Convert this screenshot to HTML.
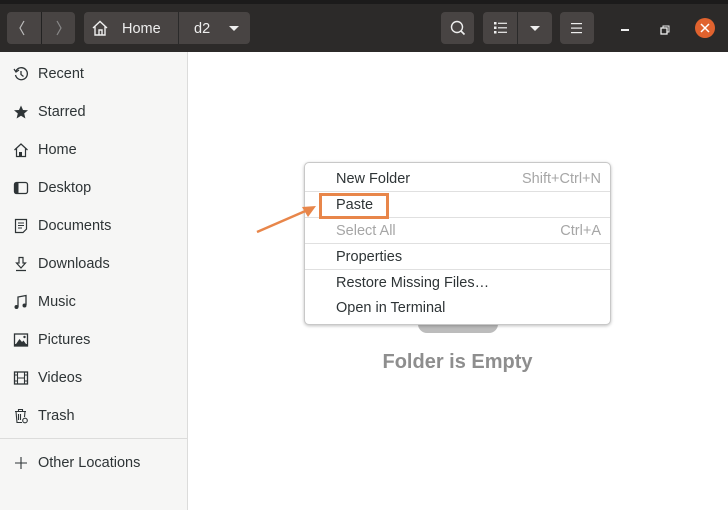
<!DOCTYPE html>
<html><head><style>
*{margin:0;padding:0;box-sizing:border-box}
body{width:728px;height:510px;overflow:hidden;font-family:"Liberation Sans",sans-serif;background:#fff;position:relative}
.top{position:absolute;left:0;top:0;width:728px;height:52px;background:#2c2a29;border-top:4px solid #1c1b1b}
.btn{position:absolute;top:12px;height:32px;background:#484443;border-radius:4px}
.side{position:absolute;left:0;top:52px;width:188px;height:458px;background:#f6f6f5;border-right:1px solid #dcdcdb}
.it{position:absolute;left:38px;font-size:14.5px;color:#2e3436}
.ic{position:absolute;left:13px;width:16px;height:16px}
.menu{position:absolute;left:304px;top:162px;width:307px;height:163px;background:#fff;border:1px solid #c8c8c8;border-radius:5px;box-shadow:0 1px 3px rgba(0,0,0,.25)}
.mi{position:absolute;left:31px;font-size:14.5px;color:#2e3436}
.sc{position:absolute;right:9px;font-size:14.5px;color:#a6a6a6}
.sep{position:absolute;left:0;right:0;height:1px;background:#e0e0e0}
</style></head><body>
<div class="top">
 <div class="btn" style="left:7px;width:68px;top:8px"></div>
 <div style="position:absolute;left:41px;top:8px;width:1px;height:32px;background:#222"></div>
 <svg style="position:absolute;left:17px;top:16px" width="10" height="16"><path d="M7 1 L3 8 L7 15" stroke="#bbb" fill="none" stroke-width="1.2"/></svg>
 <svg style="position:absolute;left:54px;top:16px" width="10" height="16"><path d="M3 1 L7 8 L3 15" stroke="#888" fill="none" stroke-width="1.2"/></svg>
 <div class="btn" style="left:84px;width:166px;top:8px"></div>
 <div style="position:absolute;left:178px;top:8px;width:1px;height:32px;background:#2a2a2a"></div>
 <svg style="position:absolute;left:91px;top:16px" width="18" height="16"><path d="M2 8 L9 1.5 L16 8 M4 6.5 V15 H14 V6.5 M8 15 V10 H11 V15" stroke="#eee" fill="none" stroke-width="1.4"/></svg>
 <div style="position:absolute;left:122px;top:17px;color:#eee;font-size:14.5px">Home</div>
 <div style="position:absolute;left:194px;top:17px;color:#eee;font-size:14.5px">d2</div>
 <svg style="position:absolute;left:228px;top:21px" width="12" height="8"><path d="M1 1 H11 L6 6Z" fill="#eee"/></svg>
 <div class="btn" style="left:441px;width:33px;top:8px"></div>
 <svg style="position:absolute;left:449px;top:15px" width="18" height="18"><circle cx="8" cy="8" r="5.5" stroke="#eee" fill="none" stroke-width="1.4"/><path d="M12 12 L15.5 15.5" stroke="#eee" stroke-width="1.6"/></svg>
 <div class="btn" style="left:483px;width:69px;top:8px"></div>
 <div style="position:absolute;left:517px;top:8px;width:1px;height:32px;background:#2a2a2a"></div>
 <svg style="position:absolute;left:493px;top:17px" width="16" height="14"><g fill="#eee"><rect x="1" y="1" width="2.5" height="2.5"/><rect x="1" y="5.5" width="2.5" height="2.5"/><rect x="1" y="10" width="2.5" height="2.5"/><rect x="5" y="1.7" width="9" height="1.2"/><rect x="5" y="6.2" width="9" height="1.2"/><rect x="5" y="10.7" width="9" height="1.2"/></g></svg>
 <svg style="position:absolute;left:529px;top:21px" width="12" height="8"><path d="M1 1 H11 L6 6Z" fill="#eee"/></svg>
 <div class="btn" style="left:560px;width:34px;top:8px"></div>
 <svg style="position:absolute;left:570px;top:17px" width="14" height="14"><g fill="#eee"><rect x="1" y="2" width="11" height="1.2"/><rect x="1" y="6.5" width="11" height="1.2"/><rect x="1" y="11" width="11" height="1.2"/></g></svg>
 <div style="position:absolute;left:621px;top:25px;width:8px;height:1.5px;background:#eee"></div>
 <svg style="position:absolute;left:660px;top:21px" width="10" height="10"><rect x="1" y="3" width="6" height="6" stroke="#eee" fill="none" stroke-width="1.3"/><path d="M3 3 V1 H9 V7 H7" stroke="#eee" fill="none" stroke-width="1"/></svg>
 <div style="position:absolute;left:695px;top:14px;width:20px;height:20px;border-radius:50%;background:#e0622e"></div>
 <svg style="position:absolute;left:700px;top:19px" width="10" height="10"><path d="M1 1 L9 9 M9 1 L1 9" stroke="#fff" stroke-width="1.5"/></svg>
</div>
<div class="side">
 <svg class="ic" style="top:14px" viewBox="0 0 16 16"><path d="M3 5 A6 6 0 1 1 2.5 9" stroke="#2e3436" fill="none" stroke-width="1.3"/><path d="M1 3 L3 6 L6 4" stroke="#2e3436" fill="none" stroke-width="1.2"/><path d="M8 5 V8.5 L10.5 10.5" stroke="#2e3436" fill="none" stroke-width="1.3"/></svg>
 <div class="it" style="top:14px">Recent</div>
 <svg class="ic" style="top:52px" viewBox="0 0 16 16"><path d="M8 1.5 L10 6 L15 6.3 L11.2 9.5 L12.4 14.5 L8 11.8 L3.6 14.5 L4.8 9.5 L1 6.3 L6 6Z" fill="#2e3436"/></svg>
 <div class="it" style="top:52px">Starred</div>
 <svg class="ic" style="top:90px" viewBox="0 0 16 16"><path d="M1.5 8 L8 2 L14.5 8 M3.5 6.5 V14.5 H12.5 V6.5" stroke="#2e3436" fill="none" stroke-width="1.2"/><rect x="6" y="10" width="3" height="4.5" fill="#2e3436"/></svg>
 <div class="it" style="top:90px">Home</div>
 <svg class="ic" style="top:128px" viewBox="0 0 16 16"><rect x="1.5" y="2.5" width="13" height="11" rx="2" stroke="#2e3436" fill="none" stroke-width="1.3"/><rect x="1.5" y="2.5" width="4" height="11" fill="#2e3436"/></svg>
 <div class="it" style="top:128px">Desktop</div>
 <svg class="ic" style="top:166px" viewBox="0 0 16 16"><path d="M2.5 1.5 H13.5 V11 L10 14.5 H2.5Z" stroke="#2e3436" fill="none" stroke-width="1.2"/><path d="M5 5 H11 M5 7.5 H11 M5 10 H9" stroke="#2e3436" stroke-width="1.1"/></svg>
 <div class="it" style="top:166px">Documents</div>
 <svg class="ic" style="top:204px" viewBox="0 0 16 16"><path d="M6 1.5 H10 V7 H12.5 L8 12 L3.5 7 H6Z M3 14.5 H13" stroke="#2e3436" fill="none" stroke-width="1.2"/></svg>
 <div class="it" style="top:204px">Downloads</div>
 <svg class="ic" style="top:242px" viewBox="0 0 16 16"><path d="M5 13 V3 L13 1.5 V11" stroke="#2e3436" fill="none" stroke-width="1.3"/><circle cx="3.5" cy="13" r="2" fill="#2e3436"/><circle cx="11.5" cy="11.5" r="2" fill="#2e3436"/></svg>
 <div class="it" style="top:242px">Music</div>
 <svg class="ic" style="top:280px" viewBox="0 0 16 16"><rect x="1.5" y="2" width="13" height="12" stroke="#2e3436" fill="none" stroke-width="1.3"/><path d="M3 12 L6.5 7 L9 10 L10.5 8.5 L13 12Z" fill="#2e3436"/><circle cx="11.5" cy="5" r="1.2" fill="#2e3436"/><rect x="1.5" y="12" width="13" height="2" fill="#2e3436"/></svg>
 <div class="it" style="top:280px">Pictures</div>
 <svg class="ic" style="top:318px" viewBox="0 0 16 16"><rect x="1.5" y="2" width="13" height="12" stroke="#2e3436" fill="none" stroke-width="1.3"/><path d="M4.5 2 V14 M11.5 2 V14 M4.5 8 H11.5 M1.5 5 H4.5 M1.5 11 H4.5 M11.5 5 H14.5 M11.5 11 H14.5" stroke="#2e3436" stroke-width="1.1"/></svg>
 <div class="it" style="top:318px">Videos</div>
 <svg class="ic" style="top:356px" viewBox="0 0 16 16"><path d="M2 3.5 H13 M5.5 3.5 V1.5 H9.5 V3.5 M3 3.5 L4 14.5 H9 M12 3.5 L11.5 9 M5.5 6 V12 M7.5 6 V12" stroke="#2e3436" fill="none" stroke-width="1.1"/><circle cx="12" cy="12.5" r="2.3" stroke="#2e3436" fill="none" stroke-width="1.1"/></svg>
 <div class="it" style="top:356px">Trash</div>
 <div style="position:absolute;left:0;top:386px;width:188px;height:1px;background:#dcdcdb"></div>
 <svg class="ic" style="top:403px" viewBox="0 0 16 16"><path d="M8 2 V14 M2 8 H14" stroke="#2e3436" stroke-width="1.1"/></svg>
 <div class="it" style="top:403px">Other Locations</div>
</div>
<div style="position:absolute;left:418px;top:315px;width:80px;height:18px;border-radius:9px;background:#bcbcbc"></div>
<div style="position:absolute;left:0;width:915px;top:351px;text-align:center;font-size:20px;font-weight:bold;color:#8e8e8e">Folder is Empty</div>
<div class="menu">
 <div class="mi" style="top:8px">New Folder</div><div class="sc" style="top:8px">Shift+Ctrl+N</div>
 <div class="sep" style="top:28px"></div>
 <div class="mi" style="top:34px">Paste</div>
 <div class="sep" style="top:54px"></div>
 <div class="mi" style="top:60px;color:#a6a6a6">Select All</div><div class="sc" style="top:60px">Ctrl+A</div>
 <div class="sep" style="top:80px"></div>
 <div class="mi" style="top:86px">Properties</div>
 <div class="sep" style="top:106px"></div>
 <div class="mi" style="top:112px">Restore Missing Files…</div>
 <div class="mi" style="top:137px">Open in Terminal</div>
</div>
<div style="position:absolute;left:319px;top:193px;width:70px;height:26px;border:3px solid #e8864a"></div>
<svg style="position:absolute;left:250px;top:200px" width="70" height="40"><path d="M7 32 L60 9" stroke="#e8864a" stroke-width="2.5"/><path d="M66 6 L52 7 L58 17Z" fill="#e8864a"/></svg>
</body></html>
